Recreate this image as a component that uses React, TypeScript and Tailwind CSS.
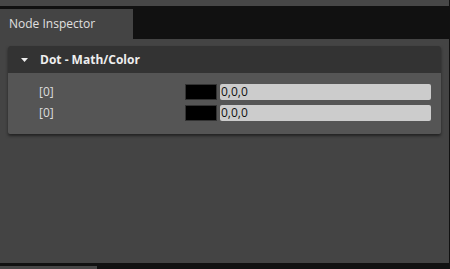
// Node inspector panel — collapsible node section with colour rows.

const rows = [
  { label: '[0]', value: '0,0,0' },
  { label: '[0]', value: '0,0,0' },
];

function ColorRow({ label, value }: { label: string; value: string }) {
  return (
    <div className="flex items-center h-[16px]">
      <span className="w-[146px] text-[12px] text-[#dddddd]">{label}</span>
      <div className="w-[32px] h-[16px] bg-black border border-[#333]" />
      <div className="ml-[3px] flex-1 h-[16px] bg-[#cccccc] rounded-[2px] px-[1px] text-[12px] leading-[16px] text-[#111]">
        {value}
      </div>
    </div>
  );
}

export default function App() {
  return (
    <div
      className="w-[450px] h-[269px] bg-[#111] flex flex-col overflow-hidden"
      style={{ fontFamily: '"Open Sans", sans-serif' }}
    >
      <div className="h-[6px] w-[449px] bg-[#474747]" />
      {/* Tab bar */}
      <div className="h-[33px] flex items-end">
        <div className="w-[133px] h-[30px] bg-[#444] text-[12px] text-[#e0e0e0] pl-[9px] pt-[6px]">
          Node Inspector
        </div>
      </div>
      {/* Panel */}
      <div className="w-[449px] h-[224px] bg-[#444] pt-[7px] pl-[8px]">
        <div className="w-[433px] bg-[#555] rounded-[2px] shadow-[0_2px_3px_rgba(0,0,0,0.5)]">
          <div className="h-[27px] bg-[#333] flex items-center pl-[13px] rounded-t-[2px]">
            <svg width="7" height="4" viewBox="0 0 7 4" className="mr-[12px]">
              <polygon points="0,0 7,0 3.5,4" fill="#eee" />
            </svg>
            <span className="text-[12px] font-bold text-[#eee]">Dot - Math/Color</span>
          </div>
          <div className="pl-[31px] pr-[10px] pt-[11px] pb-[13px] flex flex-col gap-[5px]">
            {rows.map((r, i) => (
              <ColorRow key={i} label={r.label} value={r.value} />
            ))}
          </div>
        </div>
      </div>
      <div className="h-[3px]" />
      <div className="h-[3px] w-[97px] bg-[#474747]" />
    </div>
  );
}
